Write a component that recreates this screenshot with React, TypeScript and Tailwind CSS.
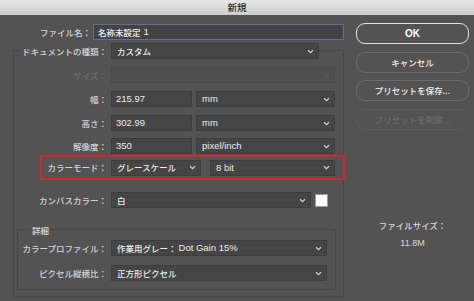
import React from "react";

const JP = "font-['Noto_Sans_CJK_JP',sans-serif]";
const LAT = "font-['Liberation_Sans','Noto_Sans_CJK_JP',sans-serif]";

function Chevron({ color = "#d0d0d0" }: { color?: string }) {
  return (
    <svg width="7" height="5" viewBox="0 0 7 5" className="shrink-0">
      <path d="M1 1.2l2.5 2.4L6 1.2" fill="none" stroke={color} strokeWidth="1.3" />
    </svg>
  );
}

function J({ children, className = "" }: { children: React.ReactNode; className?: string }) {
  return <span className={`${JP} text-[8.5px] font-medium leading-none ${className}`}>{children}</span>;
}

function L({ children, className = "" }: { children: React.ReactNode; className?: string }) {
  return <span className={`${LAT} text-[9.5px] leading-none ${className}`}>{children}</span>;
}

function Select({
  className,
  children,
  disabled = false,
}: {
  className: string;
  children?: React.ReactNode;
  disabled?: boolean;
}) {
  return (
    <div
      className={`flex h-[16px] shrink-0 items-center justify-between border pl-[5px] pr-[4px] text-[#ececec] ${
        disabled ? "border-[#4a4a4a] bg-[#4f4f4f]" : "border-[#3d3d3d] bg-[#454545]"
      } ${className}`}
    >
      <div className="flex items-center">{children}</div>
      <Chevron color={disabled ? "#5c5c5c" : "#d2d2d2"} />
    </div>
  );
}

function Input({ className, children }: { className: string; children: React.ReactNode }) {
  return (
    <div
      className={`flex h-[16px] shrink-0 items-center border border-[#3d3d3d] bg-[#454545] pl-[4px] text-[#ececec] ${className}`}
    >
      {children}
    </div>
  );
}

function Label({ w, children, disabled = false }: { w: string; children: React.ReactNode; disabled?: boolean }) {
  return (
    <div
      className={`${w} flex shrink-0 justify-end pr-[4px] ${disabled ? "text-[#6e6e6e]" : "text-[#d4d4d4]"}`}
    >
      <J>{children}</J>
    </div>
  );
}

export default function App() {
  return (
    <div className="flex h-[301px] w-[474px] flex-col overflow-hidden bg-[#535353] text-[9px] leading-none">
      {/* title bar */}
      <div className="flex h-[15px] shrink-0 items-center justify-center bg-linear-to-b from-[#e6e6e6] to-[#cdcdcd]">
        <span className={`${JP} text-[9.5px] font-medium leading-none text-[#2c2c2c]`}>新規</span>
      </div>

      <div className="flex flex-1">
        {/* left column */}
        <div className="w-[344px] shrink-0 pt-[9px]">
          {/* file name */}
          <div className="flex h-[16px] items-center">
            <div className="flex w-[93px] shrink-0 justify-end pr-[2px] text-[#d4d4d4]">
              <J>ファイル名：</J>
            </div>
            <div className="flex h-[16px] w-[251px] items-center border border-[#5b6f97] bg-[#434343] pl-[4px] text-[#f0f0f0]">
              <J>名称未設定</J>
              <L className="ml-[3px]">1</L>
            </div>
          </div>

          {/* document group box */}
          <div className="ml-[13px] mt-[10px] w-[331px] border border-[#474747] pb-[6px]">
            {/* legend row */}
            <div className="-mt-[8px] flex items-center">
              <div className="flex w-[97px] shrink-0 justify-end">
                <span className="flex bg-[#535353] pl-[2px] pr-[4px] text-[#d4d4d4]">
                  <J>ドキュメントの種類：</J>
                </span>
              </div>
              <Select className="w-[208px]">
                <J>カスタム</J>
              </Select>
            </div>

            {/* size */}
            <div className="mt-[8px] flex items-center">
              <Label w="w-[97px]" disabled>
                サイズ：
              </Label>
              <Select className="w-[224px]" disabled />
            </div>

            {/* width */}
            <div className="mt-[8px] flex items-center">
              <Label w="w-[97px]">幅：</Label>
              <Input className="w-[81px]">
                <L>215.97</L>
              </Input>
              <Select className="ml-[4px] w-[139px]">
                <L>mm</L>
              </Select>
            </div>

            {/* height */}
            <div className="mt-[8px] flex items-center">
              <Label w="w-[97px]">高さ：</Label>
              <Input className="w-[81px]">
                <L>302.99</L>
              </Input>
              <Select className="ml-[4px] w-[139px]">
                <L>mm</L>
              </Select>
            </div>

            {/* resolution */}
            <div className="mt-[7px] flex items-center">
              <Label w="w-[97px]">解像度：</Label>
              <Input className="w-[81px]">
                <L>350</L>
              </Input>
              <Select className="ml-[4px] w-[139px]">
                <L>pixel/inch</L>
              </Select>
            </div>

            {/* color mode (highlighted) */}
            <div className="ml-[26px] mt-[1px] flex h-[25px] w-[305px] items-center border-2 border-[#d3262d]">
              <Label w="w-[69px]">カラーモード：</Label>
              <Select className="w-[90px]">
                <J>グレースケール</J>
              </Select>
              <Select className="ml-[9px] w-[125px]">
                <L>8 bit</L>
              </Select>
            </div>

            {/* canvas color */}
            <div className="mt-[12px] flex items-center">
              <Label w="w-[97px]">カンバスカラー：</Label>
              <Select className="w-[200px]">
                <J>白</J>
              </Select>
              <div className="ml-[4px] h-[13px] w-[13px] border border-[#9a9a9a] bg-white" />
            </div>

            {/* details box */}
            <div className="ml-[3px] mt-[21px] w-[319px] border border-[#474747] pb-[8px]">
              <div className="-mt-[6px] ml-[13px] flex h-[12px] items-center">
                <span className="flex bg-[#535353] px-[1px] text-[#d4d4d4]">
                  <J>詳細</J>
                </span>
              </div>
              <div className="mt-[4px] flex items-center">
                <Label w="w-[93px]">カラープロファイル：</Label>
                <Select className="w-[216px]">
                  <J>作業用グレー：</J>
                  <L className="ml-[2px]">Dot Gain 15%</L>
                </Select>
              </div>
              <div className="mt-[9px] flex items-center">
                <Label w="w-[93px]">ピクセル縦横比：</Label>
                <Select className="w-[216px]">
                  <J>正方形ピクセル</J>
                </Select>
              </div>
            </div>
          </div>
        </div>

        {/* right column */}
        <div className="flex flex-1 flex-col pt-[8px]">
          <div className="ml-[12px] flex h-[21px] w-[113px] items-center justify-center rounded-[9px] border-[1.5px] border-[#e2e2e2] text-white">
            <span className={`${LAT} text-[10px] font-bold leading-none`}>OK</span>
          </div>
          <div className="ml-[12px] mt-[8px] flex h-[21px] w-[113px] items-center justify-center rounded-[9px] border-[1.5px] border-[#6c6c6c] text-[#f0f0f0]">
            <J className="font-bold">キャンセル</J>
          </div>
          <div className="ml-[12px] mt-[7px] flex h-[21px] w-[113px] items-center justify-center rounded-[9px] border-[1.5px] border-[#6c6c6c] text-[#f0f0f0]">
            <J className="font-bold">プリセットを保存...</J>
          </div>
          <div className="ml-[12px] mt-[8px] flex h-[21px] w-[113px] items-center justify-center rounded-[9px] border-[1.5px] border-[#5b5b5b] text-[#6c6c6c]">
            <J className="font-bold">プリセットを削除...</J>
          </div>

          <div className="ml-[12px] mt-[91px] flex w-[113px] flex-col items-center text-[#d8d8d8]">
            <J>ファイルサイズ：</J>
            <L className="mt-[9px] text-[9px]">11.8M</L>
          </div>
        </div>
      </div>
    </div>
  );
}
